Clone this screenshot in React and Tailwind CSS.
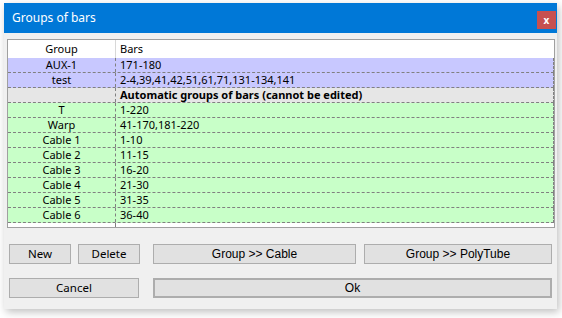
import React from 'react';

const rows = [
  { group: 'AUX-1', bars: '171-180', bg: 'bg-[#c8c8ff]' },
  { group: 'test', bars: '2-4,39,41,42,51,61,71,131-134,141', bg: 'bg-[#c8c8ff]' },
  { group: '', bars: 'Automatic groups of bars (cannot be edited)', bg: 'bg-[#e6e6e6]', bold: true },
  { group: 'T', bars: '1-220', bg: 'bg-[#c8ffc8]' },
  { group: 'Warp', bars: '41-170,181-220', bg: 'bg-[#c8ffc8]' },
  { group: 'Cable 1', bars: '1-10', bg: 'bg-[#c8ffc8]' },
  { group: 'Cable 2', bars: '11-15', bg: 'bg-[#c8ffc8]' },
  { group: 'Cable 3', bars: '16-20', bg: 'bg-[#c8ffc8]' },
  { group: 'Cable 4', bars: '21-30', bg: 'bg-[#c8ffc8]' },
  { group: 'Cable 5', bars: '31-35', bg: 'bg-[#c8ffc8]' },
  { group: 'Cable 6', bars: '36-40', bg: 'bg-[#c8ffc8]' },
];

const Button = ({ children, className = '', sans = false }) => (
  <button
    className={`h-[20px] bg-[#e1e1e1] border border-[#adadad] text-black leading-none flex items-center justify-center ${
      sans ? "font-['Liberation_Sans',sans-serif] text-[12px]" : 'text-[11.5px]'
    } ${className}`}
  >
    {children}
  </button>
);

const App = () => {
  return (
    <div className="w-[562px] h-[318px] bg-white pl-[4px] pt-[3px] font-['Noto_Sans',sans-serif]">
      <div className="w-[553px] h-[306px] bg-[#f0f0f0] flex flex-col shadow-[2px_3px_8px_rgba(0,0,0,0.25)]">
        {/* title bar */}
        <div className="h-[30px] bg-[#0078d7] flex items-center justify-between pl-[8px] pr-[1px]">
          <span className="text-white text-[12px]">Groups of bars</span>
          <div className="w-[19px] h-[18px] mt-[4px] bg-[#c75050] text-white text-[10px] font-bold flex items-center justify-center leading-none">
            x
          </div>
        </div>

        {/* table */}
        <div className="ml-[3px] mt-[6px] w-[548px] h-[189px] border border-[#a0a0a0] bg-white flex flex-col text-[11px] text-black">
          <div className="h-[18px] flex shrink-0 leading-[18px]">
            <div className="w-[108px] text-center border-r border-[#d8d8d8]">Group</div>
            <div className="flex-1 pl-[4px]">Bars</div>
          </div>
          {rows.map((r, i) => (
            <div
              key={i}
              className={`h-[15px] flex shrink-0 leading-[14px] border-b border-dashed border-[#808080] border-r ${r.bg}`}
            >
              <div className="w-[108px] text-center border-r border-dashed border-[#808080]">
                {r.group}
              </div>
              <div className={`flex-1 pl-[4px] ${r.bold ? 'font-bold' : ''}`}>{r.bars}</div>
            </div>
          ))}
          <div className="flex-1 flex">
            <div className="w-[108px] border-r border-dashed border-[#808080]" />
          </div>
        </div>

        {/* buttons */}
        <div className="flex ml-[5px] mt-[16px]">
          <Button className="w-[62px]">New</Button>
          <Button className="w-[62px] ml-[7px]">Delete</Button>
          <Button sans className="w-[203px] ml-[13px]">Group &gt;&gt; Cable</Button>
          <Button sans className="w-[188px] ml-[8px]">Group &gt;&gt; PolyTube</Button>
        </div>
        <div className="flex ml-[5px] mt-[14px]">
          <Button className="w-[130px]">Cancel</Button>
          <Button sans className="w-[399px] ml-[14px] border-2 border-[#0078d7]">Ok</Button>
        </div>
      </div>
    </div>
  );
};

export default App;
